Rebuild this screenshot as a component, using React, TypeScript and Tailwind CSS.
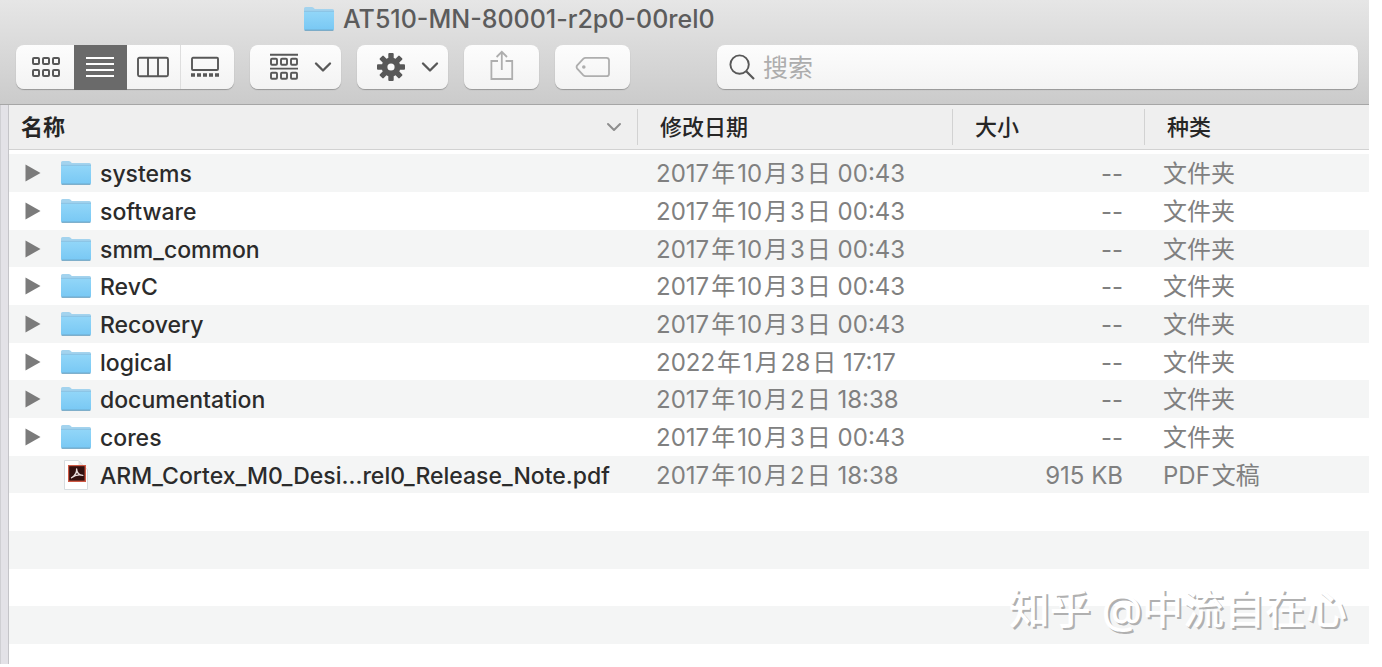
import React from 'react';
import { ChevronDown } from 'lucide-react';

type Entry = {
  name: string;
  date: string;
  size: string;
  kind: string;
  type: 'folder' | 'pdf';
};

const folder = (name: string, date = '2017年10月3日 00:43'): Entry => ({
  name,
  date,
  size: '--',
  kind: '文件夹',
  type: 'folder',
});

const entries: Entry[] = [
  folder('systems'),
  folder('software'),
  folder('smm_common'),
  folder('RevC'),
  folder('Recovery'),
  folder('logical', '2022年1月28日 17:17'),
  folder('documentation', '2017年10月2日 18:38'),
  folder('cores'),
  {
    name: 'ARM_Cortex_M0_Desi…rel0_Release_Note.pdf',
    date: '2017年10月2日 18:38',
    size: '915 KB',
    kind: 'PDF文稿',
    type: 'pdf',
  },
];

const EMPTY_ROWS = 4;

// Small gap wherever Latin characters meet Chinese ones
const MixedText: React.FC<{ text: string }> = ({ text }) => (
  <>
    {text
      .split(/([\u4e00-\u9fff]+)/)
      .filter(Boolean)
      .map((part, i) => (
        <span key={i} className={i > 0 && !part.startsWith(' ') ? 'ml-0.5' : undefined}>
          {part}
        </span>
      ))}
  </>
);

const FolderIcon: React.FC = () => (
  <svg width="32" height="26" viewBox="0 0 32 26" className="shrink-0" aria-hidden="true">
    <defs>
      <linearGradient id="folderFront" x1="0" y1="0" x2="0" y2="1">
        <stop offset="0" stopColor="#92d6f8" />
        <stop offset="1" stopColor="#78c8f4" />
      </linearGradient>
    </defs>
    <path d="M1 2.6Q1 1 2.6 1H8.6Q9.8 1 10.6 1.8L11.8 3H29.4Q31 3 31 4.6V22H1Z" fill="#a3d3ee" />
    <path d="M1 5.4H31V23Q31 24.4 29.6 24.4H2.4Q1 24.4 1 23Z" fill="url(#folderFront)" />
    <path d="M1 5.4H31" stroke="#86bfe0" strokeWidth="0.8" />
    <path d="M1.6 24.2H30.4" stroke="#6d9fbd" strokeWidth="1.1" />
  </svg>
);

const PdfIcon: React.FC = () => (
  <svg width="32" height="32" viewBox="0 0 32 32" className="shrink-0" aria-hidden="true">
    <path d="M4.5 1.5H18.5L27.5 10.5V30.5H4.5Z" fill="#fff" stroke="#d6dcdf" />
    <path d="M18.5 1.5L27.5 10.5H18.5Z" fill="#e2e4e4" />
    <rect x="8" y="6" width="18" height="17" fill="#cf5a45" />
    <rect x="9.2" y="7.2" width="15.4" height="14.4" fill="#32100f" />
    <path
      d="M11.5 18.8C14.5 17 17 13.5 16.6 9.8C16.8 13.5 19 16.2 22.8 16.4C18.8 15.4 14.8 16.2 11.5 18.8Z"
      fill="none"
      stroke="#e9dcdc"
      strokeWidth="1.3"
      strokeLinejoin="round"
    />
  </svg>
);

const IconViewGlyph: React.FC = () => (
  <svg width="30" height="22" viewBox="0 0 30 22" fill="none" stroke="#585858" strokeWidth="2" aria-hidden="true">
    {[2, 12, 22].map(x =>
      [2, 14].map(y => <rect key={`${x}-${y}`} x={x} y={y} width="6" height="6" rx="1" />)
    )}
  </svg>
);

const ListViewGlyph: React.FC = () => (
  <svg width="30" height="22" viewBox="0 0 30 22" stroke="#fff" strokeWidth="2" aria-hidden="true">
    <path d="M1 2H29M1 8H29M1 14H29M1 20H29" />
  </svg>
);

const ColumnViewGlyph: React.FC = () => (
  <svg width="34" height="22" viewBox="0 0 34 22" fill="none" stroke="#585858" strokeWidth="1.9" aria-hidden="true">
    <rect x="2" y="1.8" width="30" height="18.4" rx="1.5" />
    <path d="M12 1.8V20.2M22 1.8V20.2" />
  </svg>
);

const GalleryViewGlyph: React.FC = () => (
  <svg width="30" height="22" viewBox="0 0 30 22" fill="none" stroke="#585858" strokeWidth="1.9" aria-hidden="true">
    <rect x="2" y="1.8" width="26" height="12.2" rx="1" />
    <path d="M1 19H29" strokeWidth="3.6" strokeDasharray="4 2" />
  </svg>
);

const GroupGlyph: React.FC = () => (
  <svg width="30" height="28" viewBox="0 0 30 28" fill="none" stroke="#585858" strokeWidth="1.9" aria-hidden="true">
    <path d="M1 1.8H29M1 15.6H29" />
    {[2, 12, 22].map(x =>
      [5.8, 19.8].map(y => <rect key={`${x}-${y}`} x={x} y={y} width="6" height="6" rx="1" />)
    )}
  </svg>
);

const GearGlyph: React.FC = () => (
  <svg width="30" height="30" viewBox="0 0 30 30" fill="#585858" aria-hidden="true">
    {[0, 45, 90, 135].map(angle => (
      <rect key={angle} x="12.3" y="1" width="5.4" height="28" rx="1" transform={`rotate(${angle} 15 15)`} />
    ))}
    <circle cx="15" cy="15" r="9.4" />
    <circle cx="15" cy="15" r="3.6" fill="#fafafa" />
  </svg>
);

const ShareGlyph: React.FC = () => (
  <svg width="26" height="32" viewBox="0 0 26 32" fill="none" stroke="#aeaeae" strokeWidth="1.8" aria-hidden="true">
    <path d="M9 12H2.4V30H23.2V12H16.6" />
    <path d="M12.8 21V3M7.6 8L12.8 2.8L18 8" />
  </svg>
);

const TagGlyph: React.FC = () => (
  <svg width="36" height="22" viewBox="0 0 36 22" fill="none" stroke="#aeaeae" strokeWidth="1.8" aria-hidden="true">
    <path d="M10.5 1.8H31.5Q34 1.8 34 4.3V17.7Q34 20.2 31.5 20.2H10.5Q9.2 20.2 8.2 19.2L2.2 12.6Q1 11 2.2 9.4L8.2 2.8Q9.2 1.8 10.5 1.8Z" />
    <circle cx="8.8" cy="11" r="1.8" fill="#aeaeae" stroke="none" />
  </svg>
);

const SearchGlyph: React.FC = () => (
  <svg width="26" height="26" viewBox="0 0 26 26" fill="none" stroke="#585858" strokeWidth="1.9" aria-hidden="true">
    <circle cx="10.6" cy="10.6" r="9.2" />
    <path d="M17.2 17.2L25 25" strokeWidth="2.2" />
  </svg>
);

const control =
  'flex h-11 items-center rounded-lg bg-gradient-to-b from-[#fdfdfd] to-[#f3f3f3] shadow-[0_1px_1px_rgba(0,0,0,0.28)]';

const Toolbar: React.FC = () => (
  <div className="flex gap-4 pr-[11px] pl-4">
    <div className={control} role="group" aria-label="显示">
      <button className="flex h-full w-[58px] items-center justify-center pl-0.5" aria-label="图标">
        <IconViewGlyph />
      </button>
      <button
        className="flex h-[45px] w-[53px] items-center justify-center bg-[#6a6a6a] pr-0.5"
        aria-label="列表"
        aria-pressed="true"
      >
        <ListViewGlyph />
      </button>
      <button className="flex h-full w-[53px] items-center justify-center pr-0.5" aria-label="分栏">
        <ColumnViewGlyph />
      </button>
      <button
        className="flex h-full w-[54px] items-center justify-center border-l border-[#dedede] pr-1.5"
        aria-label="画廊"
      >
        <GalleryViewGlyph />
      </button>
    </div>
    <button className={`${control} w-[91px] justify-between pr-1 pl-[19px]`} aria-label="分组">
      <GroupGlyph />
      <ChevronDown size={28} className="text-[#585858]" />
    </button>
    <button className={`${control} w-[91px] justify-between pr-1 pl-[19px]`} aria-label="操作">
      <GearGlyph />
      <ChevronDown size={28} className="text-[#585858]" />
    </button>
    <button className={`${control} w-[75px] justify-center pb-1`} aria-label="共享">
      <ShareGlyph />
    </button>
    <button className={`${control} w-[75px] justify-center`} aria-label="标签">
      <TagGlyph />
    </button>
    <label className={`${control} ml-[71px] min-w-0 flex-1 gap-2 px-3`}>
      <SearchGlyph />
      <input
        type="search"
        placeholder="搜索"
        aria-label="搜索"
        className="min-w-0 flex-1 bg-transparent pt-0.5 text-[25px] leading-8 text-[#585858] outline-none placeholder:text-[#adadad]"
      />
    </label>
  </div>
);

const FileRow: React.FC<{ entry: Entry }> = ({ entry }) => (
  <tr className="h-[38px] odd:bg-[#f4f5f5] nth-[3n]:h-[37px]">
    <td className="p-0 pl-4">
      <div className="flex items-center">
        {entry.type === 'folder' ? (
          <button className="w-[35px] shrink-0" aria-label={`展开 ${entry.name}`}>
            <svg width="16" height="18" viewBox="0 0 16 18" aria-hidden="true">
              <path d="M0.5 0.5L15.5 9L0.5 17.5Z" fill="#7b7b7b" />
            </svg>
          </button>
        ) : (
          <span className="w-[35px] shrink-0" />
        )}
        {entry.type === 'folder' ? <FolderIcon /> : <PdfIcon />}
        <span className="ml-2 truncate pt-0.5 text-[23px] font-medium text-[#2b2b2b]">{entry.name}</span>
      </div>
    </td>
    <td className="p-0 pt-0.5 pl-[18px] text-[#808080]">
      <MixedText text={entry.date} />
    </td>
    <td className="p-0 pt-0.5 pr-[22px] text-right text-[#808080]">{entry.size}</td>
    <td className="p-0 pt-0.5 pl-[18px] text-[#808080]">
      <MixedText text={entry.kind} />
    </td>
  </tr>
);

const App: React.FC = () => {
  return (
    <div className="relative flex min-h-screen flex-col overflow-hidden bg-white pr-[13px] pb-[3px] font-['Inter','Noto_Sans_CJK_SC',sans-serif]">
      <header className="border-b border-[#a6a6a6] bg-gradient-to-b from-[#e6e6e6] to-[#cbcbcb] pb-[15px]">
        <div className="flex h-[45px] items-start pt-[3px] pl-[303px]">
          <div className="flex items-center gap-2">
            <FolderIcon />
            <h1 className="text-[25px] leading-8 font-medium text-[#5c5c5c]">AT510-MN-80001-r2p0-00rel0</h1>
          </div>
        </div>
        <Toolbar />
      </header>

      <div className="flex flex-1">
        <div className="w-[9px] shrink-0 border-r border-l border-r-[#c4c4c8] border-l-[#cfcfd3] bg-[#e3e2e7]" />
        <main className="min-w-0 flex-1">
          <table className="w-full table-fixed border-separate border-spacing-0 text-2xl leading-8">
            <colgroup>
              <col className="w-[629px]" />
              <col className="w-[315px]" />
              <col className="w-[192px]" />
              <col />
            </colgroup>
            <thead className="bg-[#efefef] text-left text-[22px] text-[#262626]">
              <tr>
                <th className="border-b border-[#d2d2d2] p-0 py-1 font-bold" aria-sort="descending">
                  <button className="flex h-9 w-full items-center justify-between border-r border-[#d2d2d2] pr-[11px] pl-3">
                    名称
                    <ChevronDown size={24} className="text-[#8e8e8e]" />
                  </button>
                </th>
                <th className="border-b border-[#d2d2d2] p-0 py-1 font-medium">
                  <div className="flex h-9 items-center border-r border-[#d2d2d2] pl-[22px]">修改日期</div>
                </th>
                <th className="border-b border-[#d2d2d2] p-0 py-1 font-medium">
                  <div className="flex h-9 items-center border-r border-[#d2d2d2] pl-[22px]">大小</div>
                </th>
                <th className="border-b border-[#d2d2d2] p-0 py-1 font-medium">
                  <div className="flex h-9 items-center pl-[22px]">种类</div>
                </th>
              </tr>
            </thead>
            <tbody aria-hidden="true">
              <tr>
                <td colSpan={4} className="h-1 p-0" />
              </tr>
            </tbody>
            <tbody>
              {entries.map(entry => (
                <FileRow key={entry.name} entry={entry} />
              ))}
              {Array.from({ length: EMPTY_ROWS }, (_, i) => (
                <tr key={i} className="h-[38px] odd:bg-[#f4f5f5] nth-[3n]:h-[37px]" aria-hidden="true">
                  <td colSpan={4} className="p-0" />
                </tr>
              ))}
            </tbody>
          </table>
        </main>
      </div>

      <div className="pointer-events-none absolute right-[35px] bottom-7 text-[41px] leading-[60px] font-medium text-white [text-shadow:2px_2px_0_#b0b0b0]">
        知乎 @中流自在心
      </div>
    </div>
  );
};

export default App;
